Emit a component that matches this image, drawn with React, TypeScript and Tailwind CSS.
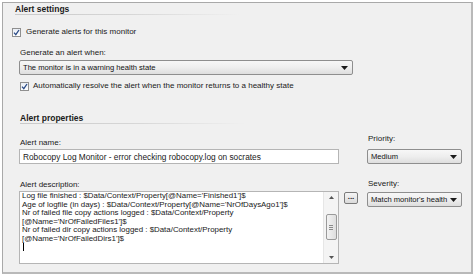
import React from "react";

const font = "font-['Liberation_Sans',Arial,sans-serif]";

function Check() {
  return (
    <div className="flex h-[9px] w-[9px] items-center justify-center border border-[#8f8f8f] bg-gradient-to-b from-[#e9eef5] to-[#ffffff]">
      <svg width="7" height="7" viewBox="0 0 7 7">
        <path d="M1 3.6 L2.8 5.6 L6 1" fill="none" stroke="#2a4b87" strokeWidth="1.3" />
      </svg>
    </div>
  );
}

function Arrow() {
  return (
    <svg width="7" height="4" viewBox="0 0 7 4">
      <path d="M0 0 H7 L3.5 4 Z" fill="#1a1a1a" />
    </svg>
  );
}

function Select({ label, className }: { label: string; className: string }) {
  return (
    <div
      className={`flex items-center justify-between rounded-[2px] border border-[#8e8e8e] bg-gradient-to-b from-[#f7f7f7] via-[#eeeeee] to-[#dedede] pl-[3px] pr-[4px] text-[7.6px] ${className}`}
    >
      <span className="whitespace-nowrap leading-none text-[#111]">{label}</span>
      <Arrow />
    </div>
  );
}

function Header({ title, className }: { title: string; className: string }) {
  return (
    <div className={className}>
      <div className="text-[8.5px] font-bold leading-[9px] text-[#1b1b1b]">{title}</div>
      <div className="h-px w-[225px] bg-gradient-to-r from-[#c9c9c9] via-[#d6d6d6] to-[#f0f0f0]" />
    </div>
  );
}

function Scrollbar() {
  return (
    <div className="flex w-[15px] flex-col items-center border-l border-[#e6e6e6] bg-[#f4f4f4]">
      <div className="flex h-[11px] w-full items-center justify-center">
        <svg width="5" height="3" viewBox="0 0 5 3">
          <path d="M0 3 H5 L2.5 0 Z" fill="#555" />
        </svg>
      </div>
      <div className="mt-[11px] flex h-[26px] w-[11px] flex-col items-center justify-center gap-[1px] rounded-[2px] border border-[#9a9a9a] bg-gradient-to-r from-[#f3f3f3] to-[#dedede]">
        <div className="h-px w-[4px] bg-[#8a8a8a]" />
        <div className="h-px w-[4px] bg-[#8a8a8a]" />
        <div className="h-px w-[4px] bg-[#8a8a8a]" />
      </div>
      <div className="flex-1" />
      <div className="flex h-[11px] w-full items-center justify-center">
        <svg width="5" height="3" viewBox="0 0 5 3">
          <path d="M0 0 H5 L2.5 3 Z" fill="#555" />
        </svg>
      </div>
    </div>
  );
}

const lines = [
  "Log file finished : $Data/Context/Property[@Name='Finished1']$",
  "Age of logfile (in days) : $Data/Context/Property[@Name='NrOfDaysAgo1']$",
  "Nr of failed file copy actions logged : $Data/Context/Property",
  "[@Name='NrOfFailedFiles1']$",
  "Nr of failed dir copy actions logged : $Data/Context/Property",
  "[@Name='NrOfFailedDirs1']$",
];

export default function App() {
  return (
    <div className={`h-[276px] w-[474px] bg-white pl-[2px] pt-[2px] ${font} text-[8px] leading-[10px] text-[#1a1a1a]`}>
      <div className="h-[272px] w-[471px] border-b-2 border-l border-r-2 border-t border-b-[#b9b9b9] border-l-[#a9a9a9] border-r-[#b9b9b9] border-t-[#a9a9a9] bg-[#f0f0f0]">
        <Header title="Alert settings" className="ml-[12px] mt-[2px]" />

        <div className="ml-[9px] mt-[12px] flex h-[10px] items-center gap-[5px]">
          <Check />
          <span>Generate alerts for this monitor</span>
        </div>

        <div className="ml-[17px] mt-[11px]">Generate an alert when:</div>
        <Select label="The monitor is in a warning health state" className="ml-[16px] mt-[2px] h-[15px] w-[334px]" />

        <div className="ml-[17px] mt-[6px] flex h-[10px] items-center gap-[4px]">
          <Check />
          <span>Automatically resolve the alert when the monitor returns to a healthy state</span>
        </div>

        <Header title="Alert properties" className="ml-[17px] mt-[23px]" />

        <div className="ml-[16px] flex">
          <div className="flex w-[320px] flex-col">
            <div className="mt-[14px] pl-[1px]">Alert name:</div>
            <div className="mt-[1px] flex h-[15px] items-center border border-[#b5b5b5] bg-white pl-[3px] text-[8.3px]">
              Robocopy Log Monitor - error checking robocopy.log on socrates
            </div>
            <div className="mt-[16px] pl-[1px]">Alert description:</div>
            <div className="mt-[1px] flex h-[73px] border border-[#b5b5b5] bg-white">
              <div className="flex-1 whitespace-pre pl-[2px] text-[7.9px] leading-[8.5px]">
                {lines.map((l) => (
                  <div key={l}>{l}</div>
                ))}
                <div className="ml-px h-[8px] w-px bg-black" />
              </div>
              <Scrollbar />
            </div>
          </div>

          <div className="ml-[5px] w-[14px] pt-[68px]">
            <div className="flex h-[12px] w-[14px] items-center justify-center rounded-[2px] border border-[#7a7a7a] bg-gradient-to-b from-[#f5f5f5] to-[#dadada] pb-[3px] text-[8px] font-bold leading-none">
              ...
            </div>
          </div>

          <div className="ml-[9px] flex w-[95px] flex-col">
            <div className="mt-[10px] pl-[1px]">Priority:</div>
            <Select label="Medium" className="mt-[5px] h-[15px]" />
            <div className="mt-[15px] pl-[1px]">Severity:</div>
            <Select label="Match monitor's health" className="mt-[3px] h-[15px]" />
          </div>
        </div>
      </div>
    </div>
  );
}
